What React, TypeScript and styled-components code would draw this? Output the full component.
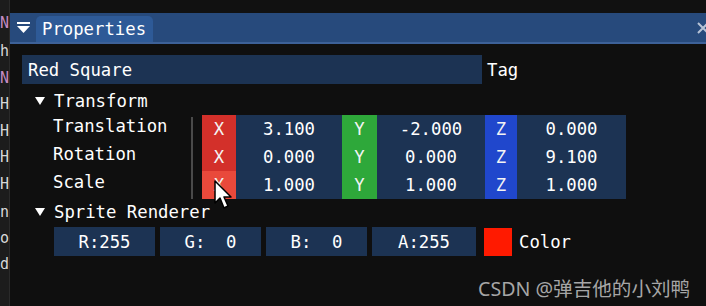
import React from 'react';
import styled, { createGlobalStyle } from 'styled-components';

const GlobalStyle = createGlobalStyle`
    html, body {
        margin: 0;
        padding: 0;
        background: #0f0f0f;
    }
`;

const Root = styled.div`
    display: flex;
    width: 706px;
    height: 306px;
    overflow: hidden;
    position: relative;
    background: #0f0f0f;
    font-family: 'DejaVu Sans Mono', 'Liberation Mono', monospace;
    font-size: 17.3px;
    color: #ffffff;
`;

const SideStrip = styled.div`
    width: 9px;
    flex-shrink: 0;
    background: #1c1c1c;
    border-right: 1px solid #2a2a2a;
    display: flex;
    flex-direction: column;
    padding-top: 14px;
    overflow: hidden;
`;

const SideGlyph = styled.div<{ $pink?: boolean; $h: number }>`
    height: ${p => p.$h}px;
    display: flex;
    justify-content: flex-end;
    font-size: 15px;
    line-height: 18px;
    white-space: pre;
    color: ${p => (p.$pink ? '#c58bc4' : '#d8d8d8')};
`;

const Window = styled.div`
    flex: 1;
    display: flex;
    flex-direction: column;
    min-width: 0;
`;

const TopGap = styled.div`
    height: 13px;
    background: #111111;
`;

const TitleBar = styled.div`
    height: 29px;
    display: flex;
    align-items: flex-end;
    background: #274a7c;
    border-bottom: 2px solid #3d6198;
`;

const MenuButton = styled.div`
    width: 26px;
    height: 100%;
    display: flex;
    align-items: center;
    justify-content: center;
`;

const Tab = styled.div`
    width: 117px;
    height: 26px;
    box-sizing: border-box;
    padding-left: 6px;
    display: flex;
    align-items: center;
    background: #2e5a97;
    border-radius: 5px 5px 0 0;
`;

const Spacer = styled.div`
    flex: 1;
`;

const Close = styled.div`
    width: 9px;
    height: 100%;
    display: flex;
    align-items: center;
    overflow: hidden;
`;

const Body = styled.div`
    display: flex;
    flex-direction: column;
    padding: 11px 0 0 12px;
`;

const NameRow = styled.div`
    display: flex;
    align-items: center;
    gap: 5px;
`;

const Field = styled.div<{ $w: number; $center?: boolean }>`
    width: ${p => p.$w}px;
    height: 29px;
    box-sizing: border-box;
    background: #1c3353;
    display: flex;
    align-items: center;
    justify-content: ${p => (p.$center ? 'center' : 'flex-start')};
    padding-left: ${p => (p.$center ? 0 : 6)}px;
    white-space: pre;
`;

const TreeNode = styled.div<{ $top: number }>`
    display: flex;
    align-items: center;
    height: 18px;
    margin-top: ${p => p.$top}px;
    padding-left: 13px;
    gap: 9px;
`;

const PropGrid = styled.div`
    display: flex;
    margin-top: 5px;
    padding-left: 31px;
`;

const Labels = styled.div`
    width: 138px;
    display: flex;
    flex-direction: column;
`;

const Label = styled.div`
    height: 28px;
    display: flex;
    align-items: center;
    margin-top: -3px;
    margin-bottom: 3px;
`;

const Separator = styled.div`
    width: 2px;
    margin-top: 2px;
    background: #4a4a4a;
    margin-right: 9px;
`;

const Rows = styled.div`
    display: flex;
    flex-direction: column;
`;

const VecRow = styled.div`
    display: flex;
    height: 28px;
`;

const Axis = styled.div<{ $color: string; $w: number }>`
    width: ${p => p.$w}px;
    background: ${p => p.$color};
    display: flex;
    align-items: center;
    justify-content: center;
    color: #f4f4f4;
`;

const Value = styled.div<{ $w: number }>`
    width: ${p => p.$w}px;
    background: #1c3353;
    display: flex;
    align-items: center;
    justify-content: center;
`;

const ColorRow = styled.div`
    display: flex;
    align-items: center;
    margin-top: 6px;
    padding-left: 32px;
    gap: 5px;
`;

const Swatch = styled.div`
    width: 28px;
    height: 28px;
    background: #ff1a00;
    margin-left: 3px;
    margin-right: 2px;
`;

const Watermark = styled.div`
    position: absolute;
    left: 478px;
    top: 273px;
    font-family: 'Noto Sans', 'Noto Sans CJK SC', sans-serif;
    font-size: 19.6px;
    color: #a6a6a6;
    white-space: nowrap;
`;

const Cursor = styled.svg`
    position: absolute;
    left: 214px;
    top: 180px;
`;

const Arrow = () => (
    <svg width="10" height="9" viewBox="0 0 10 9">
        <polygon points="0,0 10,0 5,8" fill="#ffffff" />
    </svg>
);

const axes = [
    { name: 'X', color: '#d3302a', w: 34 },
    { name: 'Y', color: '#2ea83a', w: 35 },
    { name: 'Z', color: '#2047cc', w: 32 },
];

const valueWidths = [106, 108, 109];

const transform = [
    { label: 'Translation', values: ['3.100', '-2.000', '0.000'] },
    { label: 'Rotation', values: ['0.000', '0.000', '9.100'] },
    { label: 'Scale', values: ['1.000', '1.000', '1.000'], hover: true },
];

const sideGlyphs: { t: string; pink?: boolean; h: number }[] = [
    { t: 'N', pink: true, h: 28 },
    { t: 'h', h: 27 },
    { t: 'N', pink: true, h: 26 },
    { t: 'H', h: 27 },
    { t: 'H', h: 26 },
    { t: 'H', h: 27 },
    { t: 'H', h: 28 },
    { t: 'n', h: 26 },
    { t: 'o', h: 26 },
    { t: 'd', h: 26 },
];

export default function App() {
    return (
        <Root>
            <GlobalStyle />
            <SideStrip>
                {sideGlyphs.map((g, i) => (
                    <SideGlyph key={i} $pink={g.pink} $h={g.h}>
                        {g.t}
                    </SideGlyph>
                ))}
            </SideStrip>
            <Window>
                <TopGap />
                <TitleBar>
                    <MenuButton>
                        <svg width="13" height="11" viewBox="0 0 13 11">
                            <rect x="0" y="0" width="13" height="2" fill="#ffffff" />
                            <polygon points="0,4 13,4 6.5,11" fill="#ffffff" />
                        </svg>
                    </MenuButton>
                    <Tab>Properties</Tab>
                    <Spacer />
                    <Close>
                        <svg width="12" height="12" viewBox="0 0 12 12" style={{ flexShrink: 0 }}>
                            <path d="M1 1 L11 11 M11 1 L1 11" stroke="#b7c3d6" strokeWidth="2" />
                        </svg>
                    </Close>
                </TitleBar>
                <Body>
                    <NameRow>
                        <Field $w={460}>Red Square</Field>
                        <span>Tag</span>
                    </NameRow>
                    <TreeNode $top={8}>
                        <Arrow />
                        <span>Transform</span>
                    </TreeNode>
                    <PropGrid>
                        <Labels>
                            {transform.map(r => (
                                <Label key={r.label}>{r.label}</Label>
                            ))}
                        </Labels>
                        <Separator />
                        <Rows>
                            {transform.map(r => (
                                <VecRow key={r.label}>
                                    {axes.map((a, i) => (
                                        <React.Fragment key={a.name}>
                                            <Axis
                                                $w={a.w}
                                                $color={r.hover && i === 0 ? '#e9493b' : a.color}
                                            >
                                                {a.name}
                                            </Axis>
                                            <Value $w={valueWidths[i]}>{r.values[i]}</Value>
                                        </React.Fragment>
                                    ))}
                                </VecRow>
                            ))}
                        </Rows>
                    </PropGrid>
                    <TreeNode $top={4}>
                        <Arrow />
                        <span>Sprite Renderer</span>
                    </TreeNode>
                    <ColorRow>
                        <Field $w={101} $center>R:255</Field>
                        <Field $w={101} $center>G:  0</Field>
                        <Field $w={101} $center>B:  0</Field>
                        <Field $w={104} $center>A:255</Field>
                        <Swatch />
                        <span>Color</span>
                    </ColorRow>
                </Body>
            </Window>
            <Cursor width="18" height="30" viewBox="0 0 18 30">
                <path
                    d="M1 1 L1 23 L6 18 L10 28 L14 26 L10 17 L17 17 Z"
                    fill="#ffffff"
                    stroke="#000000"
                    strokeWidth="1.5"
                    strokeLinejoin="round"
                />
            </Cursor>
            <Watermark>CSDN @弹吉他的小刘鸭</Watermark>
        </Root>
    );
}
